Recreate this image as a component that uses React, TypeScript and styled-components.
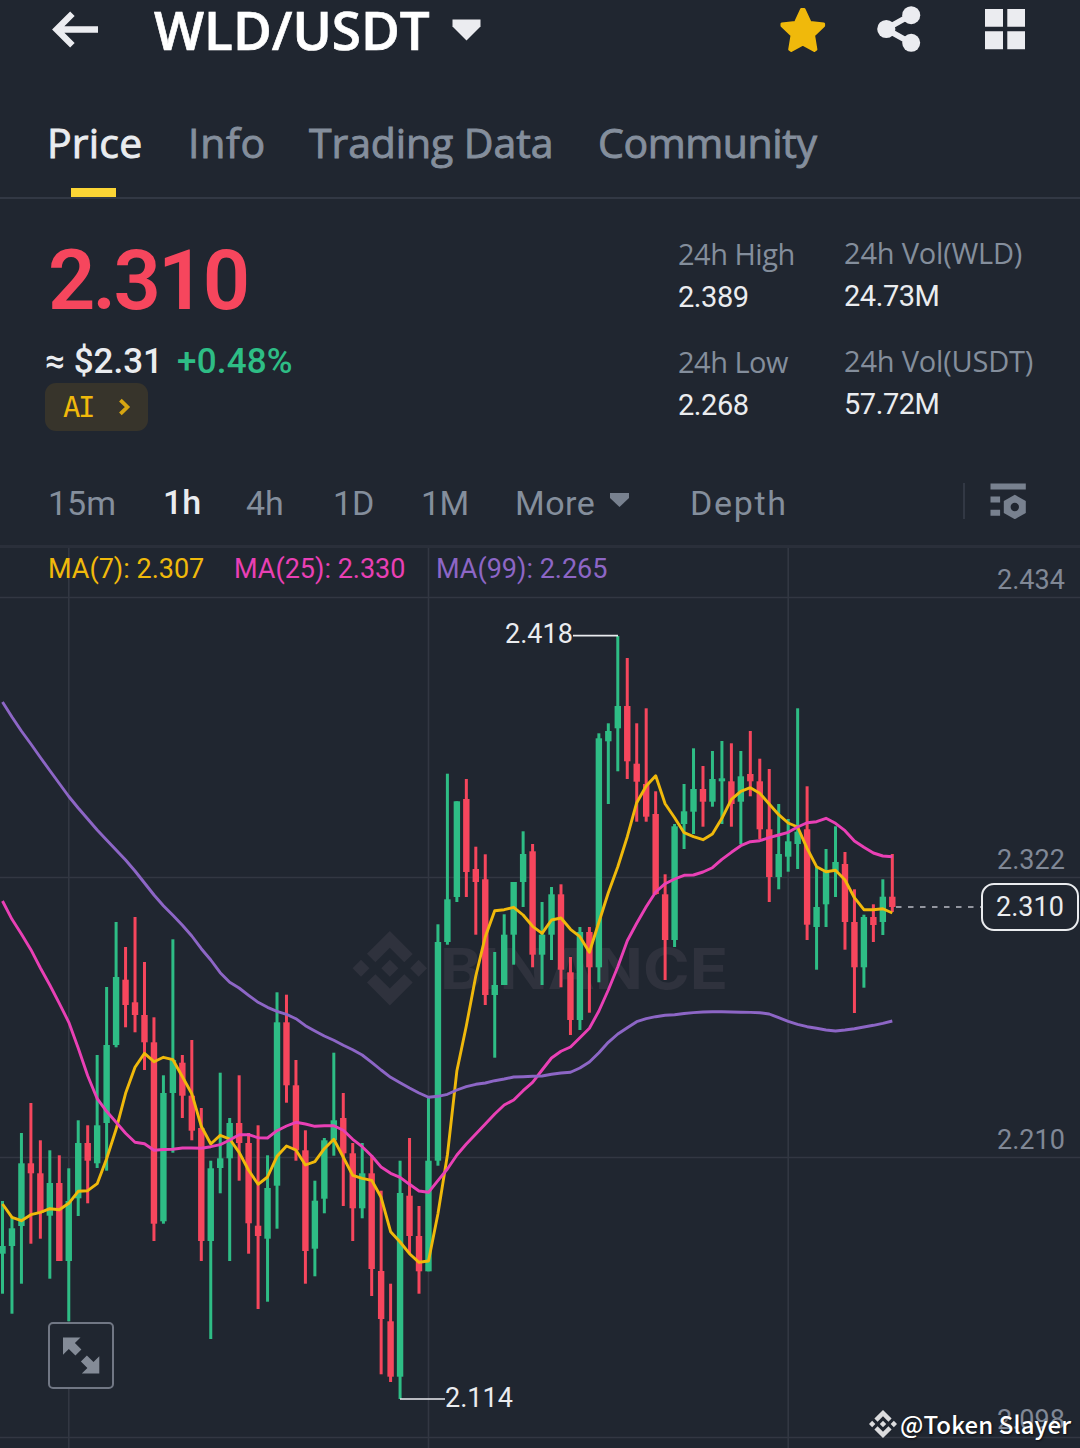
import React from "react";
import styled, { createGlobalStyle } from "styled-components";

const color = {
  bg: "#202630",
  line: "#323844",
  text: "#eaecef",
  muted: "#848e9c",
  icon: "#ebecf0",
  up: "#2ebd85",
  down: "#f6465d",
  yellow: "#f0b90b",
  pink: "#e940b5",
  purple: "#8d66c6",
};

const GlobalStyle = createGlobalStyle`
  * { box-sizing: border-box; }
  html, body { margin: 0; background: ${color.bg}; }
`;

const Screen = styled.main`
  width: 1080px;
  height: 1448px;
  overflow: hidden;
  display: flex;
  flex-direction: column;
  background: ${color.bg};
  color: ${color.text};
  font-family: Roboto, "Liberation Sans", sans-serif;
  white-space: nowrap;
`;

const Header = styled.header`
  height: 59px;
  flex: none;
  display: flex;
  align-items: center;
  padding: 0 55px 0 52px;
`;

const Title = styled.h1`
  margin: 0 19px 0 55px;
  width: 279px;
  font: 600 53px/59px "Open Sans", sans-serif;
  color: #fff;
  -webkit-text-stroke: 0.7px #fff;
`;

const HeaderActions = styled.div`
  margin-left: auto;
  display: flex;
  align-items: center;
`;

const IconSlot = styled.span<{ $gap?: number }>`
  display: flex;
  margin-left: ${(p) => p.$gap ?? 0}px;
`;

const Tabs = styled.nav`
  height: 140px;
  flex: none;
  display: grid;
  grid-template-columns: 141px 121px 289px auto;
  padding: 58px 0 0 47px;
  border-bottom: 2px solid ${color.line};
`;

const Tab = styled.span<{ $active?: boolean; $spacing: number }>`
  position: relative;
  font: 500 41px/50px "Open Sans", sans-serif;
  letter-spacing: ${(p) => p.$spacing}px;
  color: ${(p) => (p.$active ? color.text : color.muted)};
  -webkit-text-stroke: 0.9px currentColor;

  &::after {
    content: "";
    display: ${(p) => (p.$active ? "block" : "none")};
    position: absolute;
    left: 24px;
    bottom: 0;
    width: 45px;
    height: 9px;
    background: #fcd535;
  }
`;

const Summary = styled.section`
  height: 259px;
  flex: none;
  display: grid;
  grid-template-columns: 633px 166px auto;
  padding-left: 45px;
`;

const Quote = styled.div`
  padding-top: 40px;
`;

const LastPrice = styled.div`
  margin-left: 3px;
  font-size: 83px;
  line-height: 83px;
  font-weight: 600;
  letter-spacing: -2.8px;
  color: ${color.down};
`;

const FiatRow = styled.div`
  display: flex;
  margin-top: 19px;
  font-size: 35px;
  line-height: 42px;
  font-weight: 500;
`;

const Fiat = styled.span`
  width: 132px;
`;

const Change = styled.span`
  color: ${color.up};
  letter-spacing: 0.2px;
`;

const AiBadge = styled.span`
  display: flex;
  align-items: center;
  justify-content: space-between;
  width: 103px;
  height: 48px;
  padding: 0 17px 0 18px;
  border-radius: 11px;
  background: #37342b;
  color: ${color.yellow};
  font-family: "DejaVu Sans Mono", monospace;
  font-size: 29px;
  letter-spacing: -2.5px;
`;

const StatColumn = styled.dl<{ $top: number }>`
  margin: 0;
  padding-top: ${(p) => p.$top}px;
`;

const Stat = styled.div`
  height: 108px;
`;

const StatLabel = styled.dt<{ $spacing: number }>`
  padding-bottom: 2px;
  font: 400 29px/40px "Open Sans", sans-serif;
  letter-spacing: ${(p) => p.$spacing}px;
  color: ${color.muted};
`;

const StatValue = styled.dd`
  margin: 0;
  font-size: 29px;
  line-height: 42px;
  letter-spacing: -0.45px;
`;

const Intervals = styled.nav`
  height: 90px;
  flex: none;
  display: grid;
  grid-template-columns: 115px 83px 87px 88px 94px 175px 273px auto;
  align-items: center;
  padding-left: 48px;
  border-bottom: 3px solid #2a2f3a;
`;

const Interval = styled.span<{ $active?: boolean; $spacing?: number }>`
  display: flex;
  align-items: center;
  gap: 15px;
  padding-top: ${(p) => (p.$active ? 0 : 2)}px;
  font-size: 34px;
  line-height: 40px;
  font-weight: ${(p) => (p.$active ? 500 : 400)};
  letter-spacing: ${(p) => p.$spacing ?? 0}px;
  color: ${(p) => (p.$active ? color.text : color.muted)};
`;

const CaretSlot = styled.span`
  display: flex;
  padding-bottom: 6px;
`;

const ChartSettings = styled.span`
  display: flex;
  align-items: center;
  gap: 25px;
  padding-bottom: 2px;
`;

const Divider = styled.i`
  width: 2px;
  height: 36px;
  background: ${color.line};
`;

const ChartArea = styled.section`
  position: relative;
  height: 900px;
  flex: none;
`;

const ChartSvg = styled.svg`
  display: block;
`;

const Legend = styled.div`
  position: absolute;
  top: 5px;
  left: 48px;
  display: grid;
  grid-template-columns: 186px 202px auto;
  font-size: 27px;
  line-height: 32px;
`;

const LegendItem = styled.span<{ $color: string }>`
  color: ${(p) => p.$color};
`;

const ExpandButton = styled.button`
  position: absolute;
  left: 48px;
  top: 774px;
  width: 66px;
  height: 67px;
  padding: 0;
  display: flex;
  align-items: center;
  justify-content: center;
  border: 2px solid #717784;
  border-radius: 5px;
  background: ${color.bg};
`;

const PriceTag = styled.span`
  position: absolute;
  left: 981px;
  top: 335px;
  width: 98px;
  height: 48px;
  border: 2px solid ${color.text};
  border-radius: 13px;
  background: ${color.bg};
  text-align: center;
  font-size: 27px;
  line-height: 45px;
`;

const Credit = styled.div`
  position: absolute;
  left: 869px;
  top: 856px;
  display: flex;
  align-items: center;
  gap: 3px;
  color: #fff;
  font: 500 24px/39px "Noto Sans CJK SC", "Noto Sans", sans-serif;
  letter-spacing: 0.1px;
  text-shadow: 1px 1px 2px rgba(0, 0, 0, 0.6);
`;

type Candle = [up: 0 | 1, high: number, low: number, top: number, bottom: number];

const candles: Candle[] = [
  [1, 1201, 1293.7, 1246, 1253.7],
  [1, 1217, 1313.7, 1228.3, 1246],
  [1, 1133, 1283.7, 1163.3, 1226],
  [0, 1103, 1243.7, 1163.3, 1173.3],
  [0, 1140.3, 1238.7, 1173.3, 1213],
  [1, 1150.3, 1278.7, 1183, 1215.7],
  [0, 1155.3, 1261, 1183, 1261],
  [1, 1168.3, 1321.3, 1201, 1261],
  [1, 1120.3, 1216, 1143, 1198.3],
  [0, 1125.3, 1203.3, 1143, 1160.7],
  [1, 1055, 1168, 1125.3, 1163.3],
  [1, 987, 1170.7, 1045, 1123],
  [1, 922, 1047.3, 977, 1045],
  [0, 947, 1027.3, 979.7, 1005],
  [0, 917, 1032.3, 1002.3, 1015],
  [0, 962, 1070, 1015, 1042.3],
  [0, 1017.3, 1241, 1042.3, 1223.7],
  [1, 1075.3, 1223.7, 1093, 1221.3],
  [1, 939.3, 1152.7, 1060, 1093],
  [0, 1055, 1118, 1062.7, 1095.7],
  [0, 1040, 1140.3, 1095.7, 1130.7],
  [0, 1108, 1261, 1128, 1241],
  [1, 1160.7, 1339, 1168.3, 1241],
  [1, 1072.7, 1193.3, 1158.3, 1168],
  [1, 1118, 1261, 1123, 1158.3],
  [0, 1075.3, 1180.7, 1123, 1143],
  [0, 1133, 1253.7, 1143, 1223.3],
  [0, 1125.3, 1309, 1225.7, 1236],
  [1, 1155.3, 1301.7, 1188, 1238.7],
  [1, 992.3, 1228.7, 1022.3, 1185.7],
  [0, 994.7, 1102.7, 1022.3, 1085.3],
  [0, 1060, 1160.7, 1085.3, 1150.3],
  [0, 1130.3, 1283.7, 1150.3, 1251],
  [1, 1180.7, 1276.3, 1200.7, 1248.7],
  [1, 1138, 1213.3, 1140.3, 1198.7],
  [1, 1052.7, 1155.7, 1120.3, 1140.3],
  [0, 1093, 1206, 1118, 1153.3],
  [0, 1143, 1241, 1153.3, 1208.3],
  [1, 1143, 1218.3, 1173.3, 1208.3],
  [0, 1155.3, 1296, 1173.3, 1269],
  [0, 1190.7, 1374.3, 1271, 1319],
  [0, 1283.7, 1382, 1321.3, 1376.7],
  [1, 1160.7, 1399, 1193, 1376.7],
  [0, 1138, 1253, 1195.7, 1236],
  [0, 1206, 1293.7, 1236, 1271.3],
  [1, 1097, 1271.3, 1160.7, 1271.3],
  [1, 924.3, 1165.7, 942, 1160.7],
  [1, 773.7, 944.7, 899.3, 942],
  [1, 801.3, 902, 801.3, 897],
  [0, 779, 897, 799, 872],
  [0, 846.7, 934.7, 869, 882],
  [0, 854.3, 1005, 879.3, 995],
  [1, 952, 1057.7, 985, 995],
  [1, 914.3, 985, 934.7, 985],
  [1, 882, 964.7, 882, 934.7],
  [1, 831.3, 907, 854, 882],
  [0, 844, 967.3, 851.3, 954.7],
  [1, 902, 985, 934.7, 954.7],
  [1, 887, 960, 894.3, 934.7],
  [0, 884.3, 987.3, 894.3, 969.7],
  [0, 957, 1035, 972.3, 1020],
  [1, 927, 1030, 932, 1020],
  [0, 927, 1012.7, 932, 967.3],
  [1, 733.3, 982.3, 738.3, 967.3],
  [1, 723.3, 804, 731, 741.3],
  [1, 636, 771.3, 706, 728.3],
  [0, 658, 779, 706, 761.3],
  [0, 723.3, 821.7, 763.7, 781.7],
  [0, 708.3, 821.7, 784, 816.7],
  [0, 791.3, 894.7, 814, 894],
  [0, 874.3, 980, 894.3, 940],
  [1, 824, 947, 826.3, 940],
  [1, 784, 849, 811.3, 824],
  [1, 748.3, 834, 789, 811.7],
  [0, 766, 826.7, 789, 801.7],
  [1, 751, 806.7, 779, 801.7],
  [1, 741, 824, 778.3, 781.3],
  [0, 743.3, 826.7, 781.3, 804],
  [1, 751, 844.3, 776.3, 801.7],
  [0, 731, 796.3, 774, 781.3],
  [0, 758.7, 839.3, 781.3, 829.3],
  [0, 769, 902, 829.3, 877],
  [1, 804, 889.3, 854, 877],
  [1, 819, 871.7, 841.3, 856.7],
  [1, 708.3, 869, 831.7, 844],
  [0, 786.3, 940, 829.3, 924.7],
  [1, 866.7, 969.7, 907, 927],
  [1, 849, 927, 871.7, 904.3],
  [1, 826.3, 897, 862, 871.7],
  [0, 852, 949.7, 864, 922],
  [0, 889.3, 1013, 922, 967.3],
  [1, 914.7, 987.7, 917, 967.3],
  [0, 904.3, 942, 917, 925],
  [1, 879.3, 935, 896.7, 922],
  [0, 854, 912, 896.7, 907],
];

const ma7 = [
  1204, 1217.3, 1220.7, 1214.7, 1212.3, 1208.7, 1209.7, 1203.3, 1191.3, 1190.7, 1183.7, 1158.7, 1129.3, 1093.3,
  1067.3, 1053.3, 1061.7, 1057.3, 1059.7, 1076.7, 1093.7, 1126.3, 1144, 1135.3, 1139, 1152.3, 1170.3, 1184.3, 1177,
  1156.3, 1146, 1150, 1165, 1161.7, 1148.7, 1139.3, 1157.3, 1175.3, 1178.3, 1180.3, 1197.3, 1231.7, 1242, 1253.7,
  1262.3, 1261, 1214, 1155, 1070.7, 1026, 976, 936.7, 910.7, 909.7, 907.3, 915, 926.3, 933.3, 920, 918, 929.3, 936.7,
  952.3, 922.3, 892.7, 866.7, 836.7, 802.7, 786, 775.7, 803.7, 817.7, 832.7, 836.7, 839.7, 834, 818.3, 799.3, 791.3,
  787.7, 793.3, 804, 814.7, 823, 827, 848.3, 866.7, 871.7, 870.3, 880, 897.7, 909.7, 909.7, 908.7, 913,
];

const ma25 = [
  901, 919.3, 934, 949.7, 968, 985, 1003.3, 1022.3, 1048, 1075.7, 1098.7, 1111.3, 1122.3, 1133.3, 1142.3, 1143.7,
  1150.3, 1149.5, 1149.3, 1148, 1148, 1148.3, 1146.7, 1144.7, 1140, 1134.7, 1134.7, 1137.7, 1138, 1130.7, 1126,
  1122.3, 1124, 1126.3, 1125.7, 1125.7, 1130.3, 1139.3, 1146.7, 1156, 1167, 1173.3, 1177.3, 1184.3, 1191, 1192.3,
  1180.7, 1169, 1155, 1144, 1134, 1124, 1114, 1105, 1100, 1090.7, 1082.3, 1070, 1058, 1051.3, 1047, 1037.7, 1028.3,
  1011, 990, 966.7, 940.7, 923.3, 906.7, 892, 883.7, 879, 875.3, 875, 872, 867.7, 859.3, 852.3, 845.7, 841.7, 840.7,
  837.7, 835, 832.3, 827, 822.7, 821.7, 818.3, 823.3, 830.7, 841, 847.3, 853, 856, 856.7,
];

const ma99 = [
  702, 717, 731, 744, 757.5, 770.5, 783.5, 796.5, 808, 819, 830, 840, 850, 860, 871, 883, 895, 905.7, 915.3, 925.3,
  936, 948.7, 960, 972.7, 982.3, 988, 995.3, 1002.3, 1007.3, 1011.3, 1014.3, 1018.7, 1025.7, 1031, 1036, 1040.3,
  1045.3, 1049.7, 1055, 1062.3, 1070, 1077.3, 1082.7, 1088, 1093, 1097.3, 1096.3, 1094.3, 1090, 1086.7, 1084.3, 1083,
  1080.7, 1079, 1077, 1076.7, 1076.3, 1076, 1074.3, 1073, 1072.3, 1068, 1062, 1052.7, 1042.3, 1034, 1027.7, 1021.7,
  1018.7, 1016.7, 1015.3, 1014.8, 1013.5, 1012.6, 1012, 1011.7, 1011.8, 1012, 1012.2, 1012.4, 1012.7, 1014, 1017.7,
  1021.3, 1024.3, 1026.7, 1028.3, 1030, 1031, 1030, 1028.7, 1027, 1025.3, 1023.3, 1021,
];

const xAt = (i: number) => 2.5 + i * 9.466;
const toPoints = (ys: number[]) => ys.map((y, i) => `${xAt(i).toFixed(1)},${y}`).join(" ");

const BRAND_PATH =
  "M38.73 53.2l24.59-24.58 24.6 24.6 14.3-14.31L63.32 0 24.42 38.9zM0 63.31l14.3-14.31 14.31 14.31-14.31 14.3zM38.73 73.41l24.59 24.59 24.6-24.6 14.31 14.29L63.32 126.6 24.42 87.71zM98 63.31l14.3-14.31 14.31 14.3-14.31 14.32zM77.83 63.3L63.32 48.78 48.81 63.28l14.51 14.5z";

const BackIcon = () => (
  <svg width="47" height="40" viewBox="52 9.5 47 40" fill="none" stroke={color.icon} strokeWidth="6.4">
    <path d="M72.4 13.2L56.6 29l15.8 15.8M57 29h41" />
  </svg>
);

const CaretIcon = () => (
  <svg width="29" height="22" viewBox="0 0 29 22">
    <path d="M0.5 0.5h28v7L14.5 21.5 0.5 7.5z" fill={color.icon} />
  </svg>
);

const StarIcon = () => (
  <svg width="46" height="47" viewBox="780 5.4 46 47">
    <path
      d="M801.4 8.6h2.8l6 13 13.6 1.5v2.1l-10 9.6 2.3 14-1.8 1.2-11.5-6.2-11.5 6.2-1.8-1.2 2.3-14-10-9.6v-2.1l13.6-1.5z"
      fill={color.yellow}
      stroke={color.yellow}
      strokeWidth="2.6"
      strokeLinejoin="round"
    />
  </svg>
);

const ShareIcon = () => (
  <svg width="44" height="47" viewBox="877 6 44 47" fill={color.icon}>
    <path d="M911 15L886 29l25 14" fill="none" stroke={color.icon} strokeWidth="6" />
    <circle cx="886.3" cy="29" r="9.1" />
    <circle cx="911.2" cy="15.2" r="9" />
    <circle cx="911.2" cy="42.8" r="9" />
  </svg>
);

const GridIcon = () => (
  <svg width="40" height="41" viewBox="0 0 40 41" fill={color.icon}>
    <path d="M0 0h18v17.8H0zM22.3 0h17.7v17.8H22.3zM0 22.3h18V40.3H0zM22.3 22.3h17.7v18H22.3z" />
  </svg>
);

const ChevronIcon = () => (
  <svg width="12" height="18" viewBox="0 0 12 18" fill="none" stroke="#d7a611" strokeWidth="3.8">
    <path d="M1.4 2.2L8.4 9l-7 6.8" />
  </svg>
);

const SmallCaretIcon = () => (
  <svg width="19" height="14" viewBox="0 0 19 14">
    <path d="M0 0h19v5L9.5 14 0 5z" fill="#78818f" />
  </svg>
);

const ChartSettingsIcon = () => (
  <svg width="36" height="36" viewBox="990 483 36 36" fill="#78818f">
    <path d="M990.5 483.4h35.3v6h-35.3zM990.5 496.6h9.6v6h-9.6zM990.5 509.8h9.6v6h-9.6z" />
    <path
      fillRule="evenodd"
      d="M1014.8 494.8l11 6.1v12.2l-11 6.1-11-6.1v-12.2zM1014.8 502.8a4.2 4.2 0 1 0 0 8.4 4.2 4.2 0 0 0 0-8.4z"
    />
  </svg>
);

const ExpandIcon = () => (
  <svg width="38" height="38" viewBox="62 1337 38 38" fill="#848b97">
    <path d="M63 1337.5h17.5l-5.6 5.6 6.5 6.5-6 6-6.6-6.5-5.8 5.6zM99.3 1373.5H81.8l5.6-5.6-6.5-6.5 6-6 6.6 6.5 5.8-5.6z" />
  </svg>
);

const Chart = () => (
  <ChartSvg width="1080" height="900" viewBox="0 548 1080 900">
    <g stroke="#323742" strokeWidth="1.6">
      {[68.8, 428.5, 788.2].map((x) => (
        <line key={x} x1={x} x2={x} y1="548" y2="1448" />
      ))}
      {[597.5, 877.5, 1157.5, 1437.5].map((y) => (
        <line key={y} x1="0" x2="1080" y1={y} y2={y} />
      ))}
    </g>
    <g fill="#2f323d">
      <path d={BRAND_PATH} transform="translate(352.6 931) scale(0.588)" />
      <text
        x="440"
        y="988.5"
        fontFamily="Inter, sans-serif"
        fontWeight="700"
        fontSize="56"
        textLength="288"
        lengthAdjust="spacingAndGlyphs"
      >
        BINANCE
      </text>
    </g>
    {candles.map(([up, high, low, top, bottom], i) => (
      <g key={i} fill={up ? color.up : color.down}>
        <rect x={xAt(i) - 1.5} y={high} width="3" height={low - high} />
        <rect x={xAt(i) - 3.2} y={top} width="6.4" height={bottom - top} />
      </g>
    ))}
    <g fill="none" strokeWidth="2.9" strokeLinejoin="round">
      <polyline points={toPoints(ma7)} stroke={color.yellow} />
      <polyline points={toPoints(ma25)} stroke={color.pink} />
      <polyline points={toPoints(ma99)} stroke={color.purple} />
    </g>
    <g stroke={color.text} strokeWidth="1.6">
      <path d="M573 635.6h45M400 1399h45" />
      <path d="M896 907h86" strokeDasharray="5.5 6.5" stroke="#b9bcc4" />
    </g>
    <g fontFamily="Roboto, sans-serif" fontSize="27" fill={color.text}>
      <text x="505" y="642.6">2.418</text>
      <text x="445" y="1406.6">2.114</text>
    </g>
    <g fontFamily="Roboto, sans-serif" fontSize="27" fill="#808896">
      <text x="997" y="588.6">2.434</text>
      <text x="997" y="868.6">2.322</text>
      <text x="997" y="1148.6">2.210</text>
      <text x="997" y="1428.6">2.098</text>
    </g>
  </ChartSvg>
);

export default function App() {
  return (
    <Screen>
      <GlobalStyle />
      <Header>
        <BackIcon />
        <Title>WLD/USDT</Title>
        <CaretIcon />
        <HeaderActions>
          <IconSlot>
            <StarIcon />
          </IconSlot>
          <IconSlot $gap={51}>
            <ShareIcon />
          </IconSlot>
          <IconSlot $gap={64}>
            <GridIcon />
          </IconSlot>
        </HeaderActions>
      </Header>
      <Tabs>
        <Tab $active $spacing={0.2}>Price</Tab>
        <Tab $spacing={0.7}>Info</Tab>
        <Tab $spacing={-0.1}>Trading Data</Tab>
        <Tab $spacing={-0.4}>Community</Tab>
      </Tabs>
      <Summary>
        <Quote>
          <LastPrice>2.310</LastPrice>
          <FiatRow>
            <Fiat>≈ $2.31</Fiat>
            <Change>+0.48%</Change>
          </FiatRow>
          <AiBadge>
            AI
            <ChevronIcon />
          </AiBadge>
        </Quote>
        <StatColumn $top={35}>
          <Stat>
            <StatLabel $spacing={-0.5}>24h High</StatLabel>
            <StatValue>2.389</StatValue>
          </Stat>
          <Stat>
            <StatLabel $spacing={-0.5}>24h Low</StatLabel>
            <StatValue>2.268</StatValue>
          </Stat>
        </StatColumn>
        <StatColumn $top={34}>
          <Stat>
            <StatLabel $spacing={-0.2}>24h Vol(WLD)</StatLabel>
            <StatValue>24.73M</StatValue>
          </Stat>
          <Stat>
            <StatLabel $spacing={-0.2}>24h Vol(USDT)</StatLabel>
            <StatValue>57.72M</StatValue>
          </Stat>
        </StatColumn>
      </Summary>
      <Intervals>
        <Interval>15m</Interval>
        <Interval $active>1h</Interval>
        <Interval>4h</Interval>
        <Interval>1D</Interval>
        <Interval $spacing={-0.5}>1M</Interval>
        <Interval $spacing={0.5}>
          More
          <CaretSlot>
            <SmallCaretIcon />
          </CaretSlot>
        </Interval>
        <Interval $spacing={1.7}>Depth</Interval>
        <ChartSettings>
          <Divider />
          <ChartSettingsIcon />
        </ChartSettings>
      </Intervals>
      <ChartArea>
        <Chart />
        <Legend>
          <LegendItem $color={color.yellow}>MA(7): 2.307</LegendItem>
          <LegendItem $color={color.pink}>MA(25): 2.330</LegendItem>
          <LegendItem $color={color.purple}>MA(99): 2.265</LegendItem>
        </Legend>
        <PriceTag>2.310</PriceTag>
        <ExpandButton aria-label="Expand chart">
          <ExpandIcon />
        </ExpandButton>
        <Credit>
          <svg width="28" height="28" viewBox="0 0 126.61 126.61" fill="#dcdcde">
            <path d={BRAND_PATH} />
          </svg>
          @Token Slayer
        </Credit>
      </ChartArea>
    </Screen>
  );
}
